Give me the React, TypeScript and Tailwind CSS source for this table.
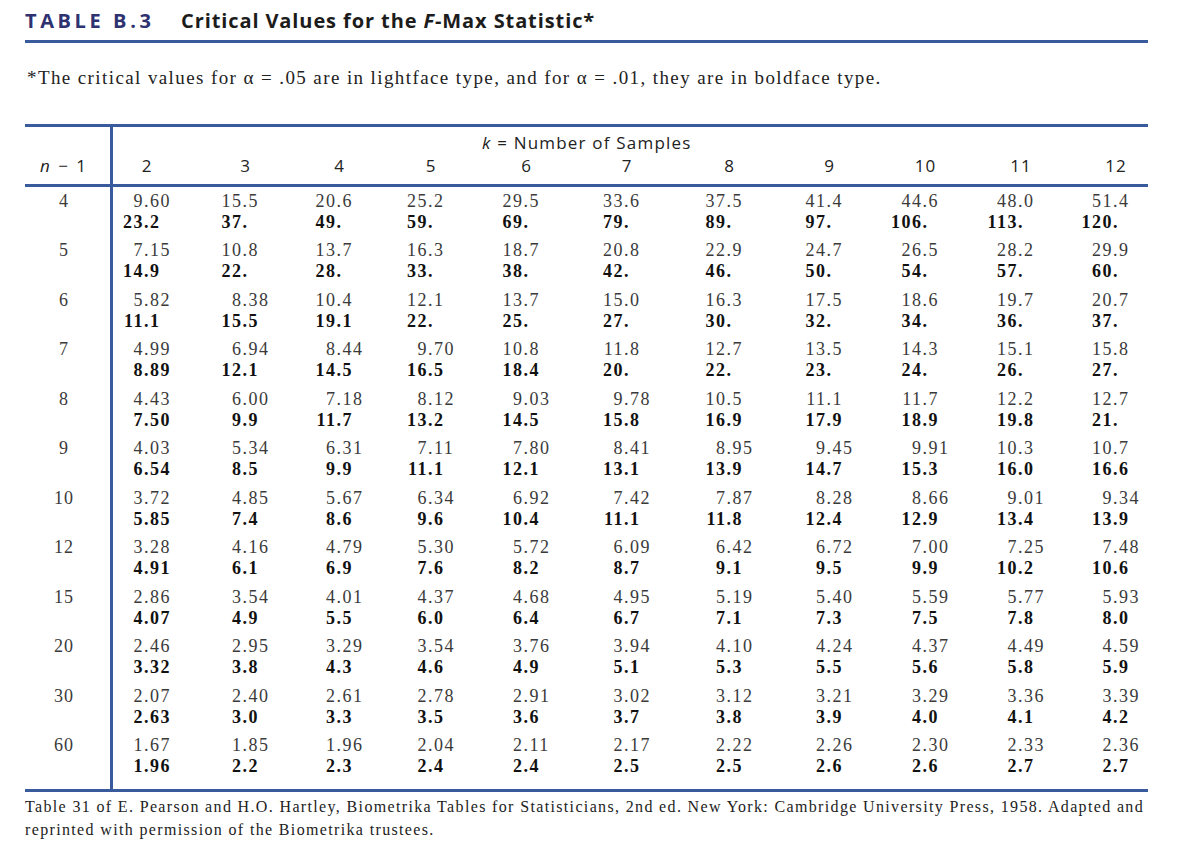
const rows: { n: string; light: string[]; bold: string[] }[] = [
  { n: '4', light: ['9.60', '15.5', '20.6', '25.2', '29.5', '33.6', '37.5', '41.4', '44.6', '48.0', '51.4'], bold: ['23.2', '37.', '49.', '59.', '69.', '79.', '89.', '97.', '106.', '113.', '120.'] },
  { n: '5', light: ['7.15', '10.8', '13.7', '16.3', '18.7', '20.8', '22.9', '24.7', '26.5', '28.2', '29.9'], bold: ['14.9', '22.', '28.', '33.', '38.', '42.', '46.', '50.', '54.', '57.', '60.'] },
  { n: '6', light: ['5.82', '8.38', '10.4', '12.1', '13.7', '15.0', '16.3', '17.5', '18.6', '19.7', '20.7'], bold: ['11.1', '15.5', '19.1', '22.', '25.', '27.', '30.', '32.', '34.', '36.', '37.'] },
  { n: '7', light: ['4.99', '6.94', '8.44', '9.70', '10.8', '11.8', '12.7', '13.5', '14.3', '15.1', '15.8'], bold: ['8.89', '12.1', '14.5', '16.5', '18.4', '20.', '22.', '23.', '24.', '26.', '27.'] },
  { n: '8', light: ['4.43', '6.00', '7.18', '8.12', '9.03', '9.78', '10.5', '11.1', '11.7', '12.2', '12.7'], bold: ['7.50', '9.9', '11.7', '13.2', '14.5', '15.8', '16.9', '17.9', '18.9', '19.8', '21.'] },
  { n: '9', light: ['4.03', '5.34', '6.31', '7.11', '7.80', '8.41', '8.95', '9.45', '9.91', '10.3', '10.7'], bold: ['6.54', '8.5', '9.9', '11.1', '12.1', '13.1', '13.9', '14.7', '15.3', '16.0', '16.6'] },
  { n: '10', light: ['3.72', '4.85', '5.67', '6.34', '6.92', '7.42', '7.87', '8.28', '8.66', '9.01', '9.34'], bold: ['5.85', '7.4', '8.6', '9.6', '10.4', '11.1', '11.8', '12.4', '12.9', '13.4', '13.9'] },
  { n: '12', light: ['3.28', '4.16', '4.79', '5.30', '5.72', '6.09', '6.42', '6.72', '7.00', '7.25', '7.48'], bold: ['4.91', '6.1', '6.9', '7.6', '8.2', '8.7', '9.1', '9.5', '9.9', '10.2', '10.6'] },
  { n: '15', light: ['2.86', '3.54', '4.01', '4.37', '4.68', '4.95', '5.19', '5.40', '5.59', '5.77', '5.93'], bold: ['4.07', '4.9', '5.5', '6.0', '6.4', '6.7', '7.1', '7.3', '7.5', '7.8', '8.0'] },
  { n: '20', light: ['2.46', '2.95', '3.29', '3.54', '3.76', '3.94', '4.10', '4.24', '4.37', '4.49', '4.59'], bold: ['3.32', '3.8', '4.3', '4.6', '4.9', '5.1', '5.3', '5.5', '5.6', '5.8', '5.9'] },
  { n: '30', light: ['2.07', '2.40', '2.61', '2.78', '2.91', '3.02', '3.12', '3.21', '3.29', '3.36', '3.39'], bold: ['2.63', '3.0', '3.3', '3.5', '3.6', '3.7', '3.8', '3.9', '4.0', '4.1', '4.2'] },
  { n: '60', light: ['1.67', '1.85', '1.96', '2.04', '2.11', '2.17', '2.22', '2.26', '2.30', '2.33', '2.36'], bold: ['1.96', '2.2', '2.3', '2.4', '2.4', '2.5', '2.5', '2.6', '2.6', '2.7', '2.7'] },
];

const ks = ['2', '3', '4', '5', '6', '7', '8', '9', '10', '11', '12'];

// column widths follow the printed table; first and last data columns are nudged
const grid = 'grid grid-cols-[88px_84px_97px_91px_92px_99px_102px_103px_97px_95px_96px_79px]';
const nudge = (i: number) => (i === 0 ? 'pr-[16px]' : i === 10 ? 'pl-[15px]' : '');

const serif = "font-['Liberation_Serif','Times_New_Roman',serif]";
const sans = "font-['Open_Sans','Liberation_Sans',sans-serif]";

function Num({ v, bold }: { v: string; bold?: boolean }) {
  const [whole, frac] = v.split('.');
  return (
    <div className={`flex justify-center ${bold ? 'font-bold text-[#111]' : 'text-[#3a3a3a]'}`}>
      <span className="flex w-[21px] justify-end">{whole}</span>
      <span className="w-[27px]">.{frac}</span>
    </div>
  );
}

export default function App() {
  return (
    <div className="min-h-[860px] w-[1200px] bg-white">
      <div className="ml-[25px] w-[1123px]">
        {/* title */}
        <div className={`pt-[9px] text-[20px] leading-[24px] font-bold ${sans} flex`}>
          <span className="w-[156px] tracking-[3.6px] text-[#2e3270]">TABLE B.3</span>
          <span className="tracking-[0.9px] text-[#1c1c1c]">
            Critical Values for the <i>F</i>-Max Statistic*
          </span>
        </div>
        <div className="mt-[7px] h-[3px] bg-[#3a5a9e]" />

        <p className={`mt-[23px] ml-[2px] text-[19px] leading-[24px] tracking-[1.4px] text-[#222] ${serif}`}>
          *The critical values for α = .05 are in lightface type, and for α = .01, they are in boldface type.
        </p>

        {/* table */}
        <div className="mt-[34px] border-t-[3px] border-b-[3px] border-[#3a5a9e]">
          <div className={`${grid} ${sans} text-[17px] leading-[20px] text-[#222] border-b-[3px] border-[#3a5a9e]`}>
            <div className="row-span-2 flex items-end justify-center border-r-[3px] border-[#3a5a9e] pr-[7px] pb-[8px] tracking-[2px]">
              <span>
                <i>n</i> − 1
              </span>
            </div>
            <div className="col-span-11 pt-[6px] pl-[369px] tracking-[1.2px]">
              <i>k</i> = Number of Samples
            </div>
            {ks.map((k, i) => (
              <div key={k} className={`mt-[3px] pb-[8px] text-center tracking-[1px] ${nudge(i)}`}>
                {k}
              </div>
            ))}
          </div>

          <div className={`${grid} ${serif} text-[18px] leading-[21px] tracking-[1.5px]`}>
            {rows.map((r) => (
              <div key={r.n} className="contents">
                <div className="h-[49.5px] border-r-[3px] border-[#3a5a9e] pt-[3.5px] pr-[7px] text-center tracking-[1px] text-[#3a3a3a]">
                  {r.n}
                </div>
                {r.light.map((v, i) => (
                  <div key={i} className={`h-[49.5px] pt-[3.5px] ${nudge(i)}`}>
                    <Num v={v} />
                    <Num v={r.bold[i]} bold />
                  </div>
                ))}
              </div>
            ))}
            <div className="h-[8px] border-r-[3px] border-[#3a5a9e]" />
          </div>
        </div>

        <p className={`mt-[3px] text-[16px] leading-[23px] tracking-[1.35px] text-[#222] whitespace-nowrap ${serif}`}>
          Table 31 of E. Pearson and H.O. Hartley, Biometrika Tables for Statisticians, 2nd ed. New York: Cambridge University Press, 1958. Adapted and
          <br />
          reprinted with permission of the Biometrika trustees.
        </p>
      </div>
    </div>
  );
}
